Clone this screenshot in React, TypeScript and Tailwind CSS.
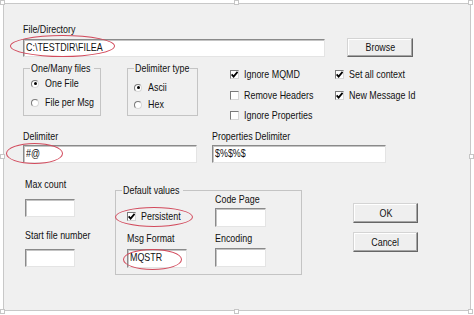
import React from "react";

// the dialog font is narrow; Liberation Sans squeezed sideways matches it
const Txt = ({ children, center }: { children: React.ReactNode; center?: boolean }) => (
  <span
    className={
      "inline-block whitespace-nowrap scale-x-[0.81] " + (center ? "origin-center" : "origin-left")
    }
  >
    {children}
  </span>
);

const Check = () => (
  <svg width="7" height="7" viewBox="0 0 7 7" className="block">
    <path d="M0.6 3.4 L2.6 5.6 L6.6 0.8" stroke="#000" strokeWidth="1.8" fill="none" />
  </svg>
);

function CheckBox({ label, checked }: { label: string; checked?: boolean }) {
  return (
    <div className="flex h-[13px] items-center whitespace-nowrap">
      <div className="flex h-[9px] w-[9px] shrink-0 items-center justify-center border border-t-[#7a7a7a] border-l-[#7a7a7a] border-r-[#d6d6d6] border-b-[#d6d6d6] bg-white">
        {checked && <Check />}
      </div>
      <span className="ml-[5px] leading-[13px]">
        <Txt>{label}</Txt>
      </span>
    </div>
  );
}

function Radio({ label, on }: { label: string; on?: boolean }) {
  return (
    <div className="flex h-[13px] items-center whitespace-nowrap">
      <div className="flex h-[8px] w-[8px] shrink-0 items-center justify-center rounded-full border border-t-[#7a7a7a] border-l-[#7a7a7a] border-r-[#d8d8d8] border-b-[#d8d8d8] bg-white">
        {on && <div className="h-[3px] w-[3px] rounded-full bg-black" />}
      </div>
      <span className="ml-[6px] leading-[13px]">
        <Txt>{label}</Txt>
      </span>
    </div>
  );
}

function Field({ className, value }: { className: string; value?: string }) {
  return (
    <div
      className={
        "overflow-hidden border border-t-[#8a8a8a] border-l-[#8a8a8a] border-r-[#e4e4e4] border-b-[#e4e4e4] bg-white pl-[2px] leading-[14px] whitespace-nowrap shadow-[inset_1px_1px_0_#c4c4c4] " +
        className
      }
    >
      {value && <Txt>{value}</Txt>}
    </div>
  );
}

function Button({ className, label }: { className: string; label: string }) {
  return (
    <div
      className={
        "flex items-center justify-center border border-t-[#d4d4d4] border-l-[#d4d4d4] border-r-[#666666] border-b-[#666666] bg-[#efefef] leading-[13px] shadow-[inset_-1px_-1px_0_#a6a6a6,inset_1px_1px_0_#ffffff] " +
        className
      }
    >
      <Txt center>{label}</Txt>
    </div>
  );
}

const Label = ({ children, className = "" }: { children: React.ReactNode; className?: string }) => (
  <div className={"leading-[13px] whitespace-nowrap " + className}>
    <Txt>{children}</Txt>
  </div>
);

const Handle = ({ className }: { className: string }) => (
  <div className={"absolute h-[5px] w-[5px] border border-[#c6c6c6] bg-white " + className} />
);

const Ring = ({ className }: { className: string }) => (
  <div className={"pointer-events-none absolute rounded-[50%] border border-[#d24a5c] " + className} />
);

export default function App() {
  return (
    <div className="relative h-[315px] w-[474px] overflow-hidden bg-white pl-[3px] pt-[3px] font-['Liberation_Sans',Arial,sans-serif] text-[11px] text-[#111]">
      <div className="h-[308px] w-[468px] border border-[#c8c8c8] bg-[#f0f0f0] pl-[19px]">
        {/* file / directory */}
        <Label className="mt-[19px]">File/Directory</Label>
        <div className="mt-[2px] flex items-start">
          <Field className="mt-[1px] h-[18px] w-[302px]" value="C:\TESTDIR\FILEA" />
          <Button className="ml-[22px] h-[19px] w-[66px]" label="Browse" />
        </div>

        {/* options */}
        <div className="mt-[5px] flex h-[68px] items-start">
          <fieldset className="h-[54px] w-[78px] min-w-0 border border-[#c4c4c4]">
            <legend className="ml-[6px] w-[64px] px-[1px] leading-[13px]">
              <Txt>One/Many files</Txt>
            </legend>
            <div className="pl-[7px]">
              <div className="mt-[2px]">
                <Radio label="One File" on />
              </div>
              <div className="mt-[6px]">
                <Radio label="File per Msg" />
              </div>
            </div>
          </fieldset>
          <fieldset className="ml-[26px] h-[54px] w-[71px] min-w-0 border border-[#c4c4c4]">
            <legend className="ml-[6px] w-[56px] px-[1px] leading-[13px]">
              <Txt>Delimiter type</Txt>
            </legend>
            <div className="pl-[6px]">
              <div className="mt-[6px]">
                <Radio label="Ascii" on />
              </div>
              <div className="mt-[4px]">
                <Radio label="Hex" />
              </div>
            </div>
          </fieldset>
          <div className="ml-[32px] w-[105px]">
            <div className="mt-[6px]">
              <CheckBox label="Ignore MQMD" checked />
            </div>
            <div className="mt-[8px]">
              <CheckBox label="Remove Headers" />
            </div>
            <div className="mt-[7px]">
              <CheckBox label="Ignore Properties" />
            </div>
          </div>
          <div>
            <div className="mt-[6px]">
              <CheckBox label="Set all context" checked />
            </div>
            <div className="mt-[8px]">
              <CheckBox label="New Message Id" checked />
            </div>
          </div>
        </div>

        {/* delimiters */}
        <div className="flex">
          <div className="w-[174px]">
            <Label>Delimiter</Label>
            <Field className="mt-[2px] h-[18px]" value="#@" />
          </div>
          <div className="ml-[15px] w-[174px]">
            <Label>Properties Delimiter</Label>
            <Field className="mt-[2px] h-[18px]" value="$%$%$" />
          </div>
        </div>

        {/* bottom */}
        <div className="flex items-start">
          <div className="ml-[2px] w-[50px]">
            <Label className="mt-[15px]">Max count</Label>
            <Field className="mt-[8px] h-[18px]" />
            <Label className="mt-[12px]">Start file number</Label>
            <Field className="mt-[7px] h-[18px]" />
          </div>
          <fieldset className="ml-[40px] mt-[21px] h-[91px] w-[187px] min-w-0 border border-[#c4c4c4]">
            <legend className="ml-[6px] w-[61px] px-[1px] leading-[13px]">
              <Txt>Default values</Txt>
            </legend>
            <div className="flex pl-[11px]">
              <div className="w-[60px]">
                <div className="mt-[13px]">
                  <CheckBox label="Persistent" checked />
                </div>
                <Label className="mt-[9px]">Msg Format</Label>
                <Field className="mt-[4px] h-[19px]" value="MQSTR" />
              </div>
              <div className="-mt-[4px] ml-[28px] w-[51px]">
                <Label>Code Page</Label>
                <Field className="mt-[2px] h-[19px]" />
                <Label className="mt-[5px]">Encoding</Label>
                <Field className="mt-[3px] h-[19px]" />
              </div>
            </div>
          </fieldset>
          <div className="ml-[51px] mt-[40px]">
            <Button className="h-[20px] w-[65px]" label="OK" />
            <Button className="mt-[9px] h-[20px] w-[65px]" label="Cancel" />
          </div>
        </div>
      </div>

      {/* red annotation rings */}
      <Ring className="left-[10px] top-[35px] h-[22px] w-[105px]" />
      <Ring className="left-[6px] top-[143px] h-[21px] w-[57px]" />
      <Ring className="left-[115px] top-[207px] h-[20px] w-[78px]" />
      <Ring className="left-[123px] top-[249px] h-[21px] w-[59px]" />

      {/* selection handles */}
      <Handle className="left-0 top-0" />
      <Handle className="left-[234px] top-0" />
      <Handle className="left-[468px] top-0" />
      <Handle className="left-0 top-[154px]" />
      <Handle className="left-[469px] top-[154px]" />
      <Handle className="left-0 top-[309px]" />
      <Handle className="left-[234px] top-[309px]" />
      <Handle className="left-[468px] top-[309px]" />
    </div>
  );
}
